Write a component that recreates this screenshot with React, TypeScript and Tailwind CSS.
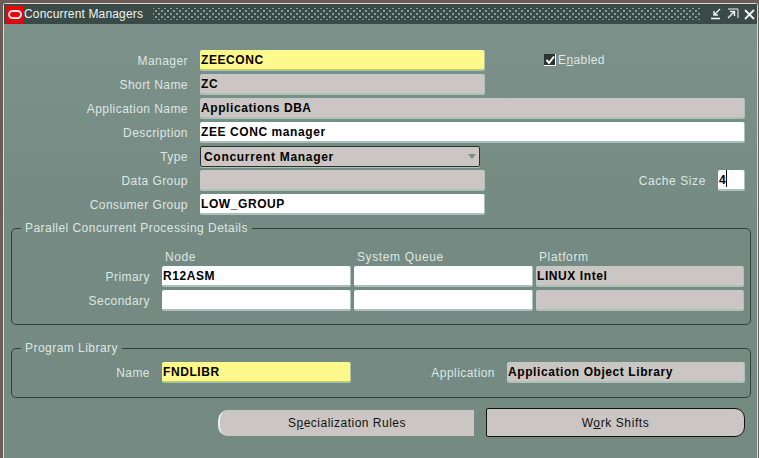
import React from "react";

const font = { fontFamily: '"Liberation Sans", Arial, sans-serif' };

function Label({ children, w = "w-[184px]" }: { children: React.ReactNode; w?: string }) {
  return (
    <div className={`${w} h-[21px] shrink-0 whitespace-nowrap text-right text-[12px] leading-[23px] tracking-[0.45px] text-[#dfe7e4]`}>{children}</div>
  );
}

function Field({ value, w, color = "white" }: { value?: string; w: string; color?: "white" | "yellow" | "gray" }) {
  const bg = color === "white" ? "bg-white" : color === "yellow" ? "bg-[#fff88c]" : "bg-[#cbc6c3]";
  return (
    <div
      className={`${w} ${bg} h-[21px] shrink-0 rounded-[2px] border-b-2 border-r border-[#a9c3bb] pl-[1px] text-[12px] font-bold leading-[20px] tracking-[0.58px] text-black`}
    >
      {value}
    </div>
  );
}

function Row({ label, children }: { label: string; children: React.ReactNode }) {
  return (
    <div className="flex h-[21px] items-start gap-[12px]">
      <Label>{label}</Label>
      {children}
    </div>
  );
}

function Group({ title, className, children }: { title: string; className: string; children: React.ReactNode }) {
  return (
    <div className={`relative ml-[7px] w-[740px] rounded-[5px] border border-[#2f403c] ${className}`}>
      <div className="absolute left-[9px] top-[-9px] bg-[#748a82] px-[4px] text-[12px] leading-[17px] tracking-[0.46px] text-[#dfe7e4]">
        {title}
      </div>
      {children}
    </div>
  );
}

export default function App() {
  return (
    <div style={font} className="h-[458px] w-[759px] overflow-hidden bg-[#6a5d58] pl-[3px] pt-[3px]">
      <div className="flex h-[460px] w-[755px] flex-col rounded-tl-[3px] rounded-tr-[3px] border-l border-t border-r border-[#d8dcd8] bg-[#748a82]">
        {/* Title bar */}
        <div className="flex h-[20px] shrink-0 items-center bg-[#3a4a46] pl-[2px]">
          <div className="flex h-[18px] w-[17px] shrink-0 items-center justify-center bg-[#e00810]">
            <div className="h-[9px] w-[14px] rounded-[5px] border-2 border-[#f6dede]" />
          </div>
          <div className="ml-[1px] w-[129px] shrink-0 whitespace-nowrap text-[12px] leading-[20px] tracking-[0.16px] text-[#eef2f0]">
            Concurrent Managers
          </div>
          <div className="h-[12px] w-[547px] shrink-0 bg-[radial-gradient(circle,#8e9f99_0.7px,transparent_1px),radial-gradient(circle,#8e9f99_0.7px,transparent_1px)] bg-[length:6px_6px] bg-[position:0_0,3px_3px]" />
          <div className="ml-[10px] flex shrink-0 items-center gap-[5px]">
            <svg width="12" height="12" viewBox="0 0 12 12" fill="none" stroke="#eef2f0" strokeWidth="1.4">
              <path d="M10 1 L4 7 M4 3 V7 H8" />
              <path d="M1 10.5 H10" strokeWidth="1.6" />
            </svg>
            <svg width="12" height="12" viewBox="0 0 12 12" fill="none" stroke="#eef2f0" strokeWidth="1.4">
              <path d="M1 10 L7 4 M3 3.5 H7.5 V8" />
              <path d="M1 1 H11 V10" strokeWidth="1" />
            </svg>
            <svg width="11" height="11" viewBox="0 0 11 11" fill="none" stroke="#f4f6f5" strokeWidth="1.8">
              <path d="M1 1 L10 10 M10 1 L1 10" />
            </svg>
          </div>
        </div>

        {/* Form */}
        <div className="flex flex-1 flex-col bg-linear-to-b from-[#7b9189] to-[#748a82] to-[45%] pt-[26px]">
          <div className="flex flex-col gap-[3px]">
            <Row label="Manager">
              <Field w="w-[285px]" color="yellow" value="ZEECONC" />
              <div className="ml-[47px] flex items-center gap-[2px]">
                <div className="flex h-[12px] w-[12px] items-center justify-center border-b border-r border-white bg-[#2d3331]">
                  <svg width="10" height="10" viewBox="0 0 10 10" fill="none" stroke="white" strokeWidth="2">
                    <path d="M1.5 5 L4 8 L9 1.5" />
                  </svg>
                </div>
                <div className="text-[12px] leading-[20px] tracking-[0.4px] text-[#dfe7e4]">
                  E<span className="underline">n</span>abled
                </div>
              </div>
            </Row>
            <Row label="Short Name">
              <Field w="w-[285px]" color="gray" value="ZC" />
            </Row>
            <Row label="Application Name">
              <Field w="w-[545px]" color="gray" value="Applications DBA" />
            </Row>
            <Row label="Description">
              <Field w="w-[545px]" value="ZEE CONC manager" />
            </Row>
            <Row label="Type">
              <div className="flex h-[21px] w-[280px] shrink-0 items-center justify-between rounded-[2px] border border-[#27332f] bg-[#cbc6c3] pl-[3px] pr-[3px] shadow-[0_1px_0_#a9c3bb]">
                <span className="text-[12px] font-bold tracking-[0.7px] text-black">Concurrent Manager</span>
                <span className="mb-[1px] h-0 w-0 border-x-[4px] border-t-[5px] border-x-transparent border-t-[#7d8b86]" />
              </div>
            </Row>
            <Row label="Data Group">
              <Field w="w-[285px]" color="gray" />
              <div className="ml-[129px] w-[80px] shrink-0 whitespace-nowrap text-right text-[12px] leading-[23px] tracking-[0.6px] text-[#dfe7e4]">
                Cache Size
              </div>
              <div className="relative h-[21px] w-[27px] shrink-0 rounded-[2px] border-b-2 border-r border-[#a9c3bb] bg-white pl-[1px] text-[12px] font-bold leading-[20px] text-black">
                4
                <span className="absolute left-[8px] top-0 h-[17px] w-px bg-black" />
              </div>
            </Row>
            <Row label="Consumer Group">
              <Field w="w-[285px]" value="LOW_GROUP" />
            </Row>
          </div>

          <Group title="Parallel Concurrent Processing Details" className="mt-[13px] h-[97px] pt-[20px]">
            <div className="flex h-[17px] pl-[150px] text-[12px] leading-[16px] tracking-[0.62px] text-[#dfe7e4]">
              <div className="w-[195px] pl-[3px]">Node</div>
              <div className="w-[182px]">System Queue</div>
              <div>Platform</div>
            </div>
            <div className="flex flex-col gap-[3px]">
              <div className="flex gap-[12px]">
                <Label w="w-[138px]">Primary</Label>
                <div className="flex gap-[3px]">
                  <Field w="w-[189px]" value="R12ASM" />
                  <Field w="w-[179px]" />
                  <Field w="w-[208px]" color="gray" value="LINUX Intel" />
                </div>
              </div>
              <div className="flex gap-[12px]">
                <Label w="w-[138px]">Secondary</Label>
                <div className="flex gap-[3px]">
                  <Field w="w-[189px]" />
                  <Field w="w-[179px]" />
                  <Field w="w-[208px]" color="gray" />
                </div>
              </div>
            </div>
          </Group>

          <Group title="Program Library" className="mt-[23px] h-[50px] pt-[13px]">
            <div className="flex">
              <Label w="w-[138px]">Name</Label>
              <div className="ml-[12px]">
                <Field w="w-[189px]" color="yellow" value="FNDLIBR" />
              </div>
              <Label w="w-[144px]">Application</Label>
              <div className="ml-[12px]">
                <Field w="w-[238px]" color="gray" value="Application Object Library" />
              </div>
            </div>
          </Group>

          <div className="ml-[214px] mt-[10px] flex items-center gap-[12px]">
            <button className="h-[26px] w-[256px] rounded-l-[10px] rounded-r-none border-l-2 border-[#e6ece9] bg-[#cbc6c3] text-[12px] tracking-[0.5px] text-[#111]">
              S<span className="underline">p</span>ecialization Rules
            </button>
            <button className="h-[29px] w-[259px] rounded-r-[10px] rounded-l-[2px] border border-[#111] bg-[#cbc6c3] text-[12px] tracking-[0.6px] text-[#111]">
              W<span className="underline">o</span>rk Shifts
            </button>
          </div>
        </div>
      </div>
    </div>
  );
}
